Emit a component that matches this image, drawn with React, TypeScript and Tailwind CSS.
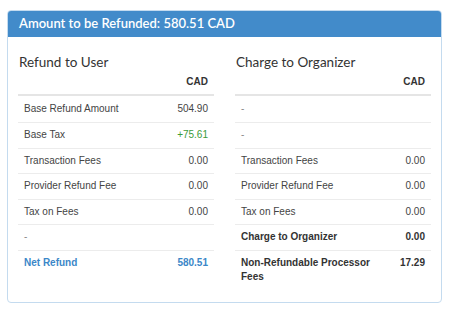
import React from "react";

type Row = { label: string; value?: string; kind?: "normal" | "green" | "blue" | "bold" | "dash" };

const left: Row[] = [
  { label: "Base Refund Amount", value: "504.90" },
  { label: "Base Tax", value: "+75.61", kind: "green" },
  { label: "Transaction Fees", value: "0.00" },
  { label: "Provider Refund Fee", value: "0.00" },
  { label: "Tax on Fees", value: "0.00" },
  { label: "-", kind: "dash" },
  { label: "Net Refund", value: "580.51", kind: "blue" },
];

const right: Row[] = [
  { label: "-", kind: "dash" },
  { label: "-", kind: "dash" },
  { label: "Transaction Fees", value: "0.00" },
  { label: "Provider Refund Fee", value: "0.00" },
  { label: "Tax on Fees", value: "0.00" },
  { label: "Charge to Organizer", value: "0.00", kind: "bold" },
  { label: "Non-Refundable Processor Fees", value: "17.29", kind: "bold" },
];

function Table({ title, rows }: { title: string; rows: Row[] }) {
  return (
    <div className="flex flex-col">
      <div
        className="h-[20px] leading-[20px] text-[13.5px] text-[#333] pl-[1px]"
        style={{ fontFamily: "Lato, 'Open Sans', sans-serif" }}
      >
        {title}
      </div>
      <div className="flex justify-end pt-[3px] pb-[5px] pr-[6px] leading-[14px] text-[10px] font-bold text-[#333] border-b-2 border-[#e5e5e5]">
        CAD
      </div>
      {rows.map((r, i) => {
        const color =
          r.kind === "green"
            ? "text-[#3a9b3a]"
            : r.kind === "blue"
            ? "text-[#3b87c8] font-bold"
            : r.kind === "bold"
            ? "text-[#333] font-bold"
            : r.kind === "dash"
            ? "text-[#888]"
            : "text-[#444]";
        const labelColor =
          r.kind === "blue"
            ? "text-[#3b87c8] font-bold"
            : r.kind === "bold"
            ? "text-[#333] font-bold"
            : r.kind === "dash"
            ? "text-[#888]"
            : "text-[#444]";
        return (
          <div
            key={i}
            className={`flex items-start text-[10px] leading-[14.5px] ${
              i === 0 ? "pt-[6px] pb-[5.5px]" : "border-t border-[#ececec] py-[5px]"
            }`}
          >
            <div className={`flex-1 pl-[6px] pr-[6px] ${labelColor}`}>{r.label}</div>
            <div className={`w-[50px] text-right pr-[6px] ${color}`}>{r.value ?? ""}</div>
          </div>
        );
      })}
    </div>
  );
}

export default function App() {
  return (
    <div
      className="w-[452px] h-[315px] bg-white pt-[10px] pl-[7px]"
      style={{ fontFamily: "'Liberation Sans', Arial, sans-serif" }}
    >
      <div className="w-[435px] h-[293px] border border-[#c4dbef] rounded-[4px] overflow-hidden flex flex-col">
        <div
          className="h-[26px] bg-[#428bca] text-white text-[13px] font-semibold flex items-center pl-[11px]"
          style={{ fontFamily: "Lato, 'Open Sans', sans-serif" }}
        >
          Amount to be Refunded: 580.51 CAD
        </div>
        <div className="grid grid-cols-[196px_196px] gap-[21px] px-[10px] pt-[15px]">
          <Table title="Refund to User" rows={left} />
          <Table title="Charge to Organizer" rows={right} />
        </div>
      </div>
    </div>
  );
}
